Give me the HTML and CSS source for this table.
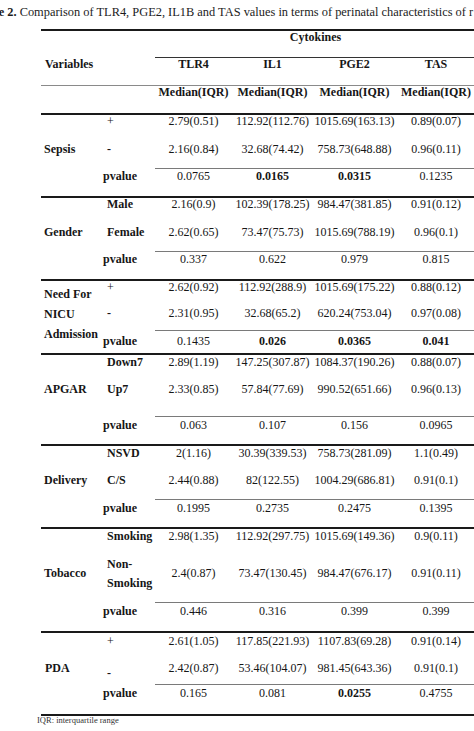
FILE: index.html
```html
<!DOCTYPE html>
<html lang="en">
<head>
<meta charset="utf-8">
<title>Table 2</title>
<link rel="stylesheet" href="styles.css">
</head>
<body>
<div class="page">
  <p class="caption"><b>Table 2.</b> Comparison of TLR4, PGE2, IL1B and TAS values in terms of perinatal characteristics of r</p>
  <table class="tbl">
    <colgroup>
      <col class="c-var"><col class="c-sub"><col class="c-d1"><col class="c-d2"><col class="c-d3"><col class="c-d4">
    </colgroup>
    <thead>
      <tr class="h1"><th></th><th></th><th colspan="4" class="cyto">Cytokines</th></tr>
      <tr class="h2"><th class="var">Variables</th><th></th><th>TLR4</th><th>IL1</th><th>PGE2</th><th>TAS</th></tr>
      <tr class="h3"><th></th><th></th><th>Median(IQR)</th><th>Median(IQR)</th><th>Median(IQR)</th><th>Median(IQR)</th></tr>
    </thead>
    <tbody class="grp">
      <tr class="r1 k28 p0"><th rowspan="3" class="lbl">Sepsis</th><td class="sub reg">+</td><td>2.79(0.51)</td><td>112.92(112.76)</td><td>1015.69(163.13)</td><td>0.89(0.07)</td></tr>
      <tr class="r2 k27 p2"><td class="sub">-</td><td>2.16(0.84)</td><td>32.68(74.42)</td><td>758.73(648.88)</td><td>0.96(0.11)</td></tr>
      <tr class="pv k28 p1"><td class="sub pvl">pvalue</td><td>0.0765</td><td class="b">0.0165</td><td class="b">0.0315</td><td>0.1235</td></tr>
    </tbody>
    <tbody class="grp">
      <tr class="r1 k28 p0"><th rowspan="3" class="lbl">Gender</th><td class="sub">Male</td><td>2.16(0.9)</td><td>102.39(178.25)</td><td>984.47(381.85)</td><td>0.91(0.12)</td></tr>
      <tr class="r2 k27 p2"><td class="sub">Female</td><td>2.62(0.65)</td><td>73.47(75.73)</td><td>1015.69(788.19)</td><td>0.96(0.1)</td></tr>
      <tr class="pv k28 p1"><td class="sub pvl">pvalue</td><td>0.337</td><td>0.622</td><td>0.979</td><td>0.815</td></tr>
    </tbody>
    <tbody class="grp">
      <tr class="r1 k26 p0"><th rowspan="3" class="lbl nicu">Need For<br>NICU<br>Admission</th><td class="sub reg">+</td><td>2.62(0.92)</td><td>112.92(288.9)</td><td>1015.69(175.22)</td><td>0.88(0.12)</td></tr>
      <tr class="r2 k25 p2"><td class="sub">-</td><td>2.31(0.95)</td><td>32.68(65.2)</td><td>620.24(753.04)</td><td>0.97(0.08)</td></tr>
      <tr class="pv k23 p4"><td class="sub pvl">pvalue</td><td>0.1435</td><td class="b">0.026</td><td class="b">0.0365</td><td class="b">0.041</td></tr>
    </tbody>
    <tbody class="grp">
      <tr class="r1 k28 p1"><th rowspan="3" class="lbl">APGAR</th><td class="sub">Down7</td><td>2.89(1.19)</td><td>147.25(307.87)</td><td>1084.37(190.26)</td><td>0.88(0.07)</td></tr>
      <tr class="r2 k35 p2"><td class="sub">Up7</td><td>2.33(0.85)</td><td>57.84(77.69)</td><td>990.52(651.66)</td><td>0.96(0.13)</td></tr>
      <tr class="pv k28 p2"><td class="sub pvl">pvalue</td><td>0.063</td><td>0.107</td><td>0.156</td><td>0.0965</td></tr>
    </tbody>
    <tbody class="grp">
      <tr class="r1 k28 p1"><th rowspan="3" class="lbl">Delivery</th><td class="sub">NSVD</td><td>2(1.16)</td><td>30.39(339.53)</td><td>758.73(281.09)</td><td>1.1(0.49)</td></tr>
      <tr class="r2 k27 p2"><td class="sub">C/S</td><td>2.44(0.88)</td><td>82(122.55)</td><td>1004.29(686.81)</td><td>0.91(0.1)</td></tr>
      <tr class="pv k28 p2"><td class="sub pvl">pvalue</td><td>0.1995</td><td>0.2735</td><td>0.2475</td><td>0.1395</td></tr>
    </tbody>
    <tbody class="grp">
      <tr class="r1 k28 p1"><th rowspan="3" class="lbl tob">Tobacco</th><td class="sub">Smoking</td><td>2.98(1.35)</td><td>112.92(297.75)</td><td>1015.69(149.36)</td><td>0.9(0.11)</td></tr>
      <tr class="r2 k47 p12"><td class="sub two">Non-<br>Smoking</td><td>2.4(0.87)</td><td>73.47(130.45)</td><td>984.47(676.17)</td><td>0.91(0.11)</td></tr>
      <tr class="pv k29 p2"><td class="sub pvl">pvalue</td><td>0.446</td><td>0.316</td><td>0.399</td><td>0.399</td></tr>
    </tbody>
    <tbody class="grp">
      <tr class="r1 k28 p2"><th rowspan="3" class="lbl pda">PDA</th><td class="sub reg">+</td><td>2.61(1.05)</td><td>117.85(221.93)</td><td>1107.83(69.28)</td><td>0.91(0.14)</td></tr>
      <tr class="r2 k25 p3"><td class="sub"><span class="low">-</span></td><td>2.42(0.87)</td><td>53.46(104.07)</td><td>981.45(643.36)</td><td>0.91(0.1)</td></tr>
      <tr class="pv k30 p2"><td class="sub pvl">pvalue</td><td>0.165</td><td>0.081</td><td class="b">0.0255</td><td>0.4755</td></tr>
    </tbody>
  </table>
  <p class="note">IQR: interquartile range</p>
</div>
</body>
</html>
```
FILE: styles.css
```css
html, body {
  margin: 0;
  padding: 0;
  background: #ffffff;
  overflow: hidden;
}

.page {
  width: 474px;
  height: 731px;
  overflow: hidden;
  padding-top: 4px;
  box-sizing: border-box;
  color: #161616;
  font-family: "Liberation Serif", "Times New Roman", serif;
}

.caption {
  margin: 0;
  font-size: 12.4px;
  line-height: 16px;
  white-space: nowrap;
  text-indent: -25px;
  color: #1c1c1c;
}

.caption b {
  font-weight: 700;
}

.tbl {
  margin: 9px 0 0 41px;
  border-collapse: separate;
  border-spacing: 0;
  border-top: 2px solid #1a1a1a;
  border-bottom: 2px solid #1a1a1a;
  table-layout: fixed;
  width: 435px;
  font-size: 12px;
  line-height: 12px;
}

.c-var { width: 59px; }
.c-sub { width: 55px; }
.c-d1 { width: 77px; }
.c-d2 { width: 81px; }
.c-d3 { width: 83px; }
.c-d4 { width: 80px; }

.tbl th,
.tbl td {
  box-sizing: border-box;
  padding: 0;
  vertical-align: top;
  text-align: center;
  white-space: nowrap;
}

.tbl th {
  font-weight: 700;
}

/* header rows */
.h1 > * { height: 27px; }
.h2 > * { height: 27px; padding-top: 2px; }
.h3 > * { height: 28px; padding-top: 2px; border-top: 1px solid #8a8a8a; }

.cyto {
  border-bottom: 1px solid #333333;
}

.var {
  text-align: left !important;
  padding-left: 4px !important;
}

/* body groups */
.grp .r1 > * { border-top: 2px solid #1a1a1a; }
.grp .pv > * { border-top: 1px solid #7a7a7a; }
.grp .pv > .sub { border-top-color: transparent; }

.k23 > td { height: 23px; }
.k25 > td { height: 25px; }
.k26 > td { height: 26px; }
.k27 > td { height: 27px; }
.k28 > td { height: 28px; }
.k29 > td { height: 29px; }
.k30 > td { height: 30px; }
.k35 > td { height: 35px; }
.k47 > td { height: 47px; }

.p0 > td { padding-top: 0; }
.p1 > td { padding-top: 1px; }
.p2 > td { padding-top: 2px; }
.p3 > td { padding-top: 3px; }
.p4 > td { padding-top: 4px; }
.p12 > td { padding-top: 12px; }

.lbl {
  text-align: left !important;
  padding: 28px 0 0 3px !important;
}

.lbl.tob { padding-top: 38px !important; }
.lbl.pda { padding-top: 29px !important; padding-left: 4px !important; }
.lbl.nicu {
  padding-top: 3px !important;
  line-height: 20px;
}

.sub {
  text-align: left !important;
  padding-left: 7px !important;
  font-weight: 700;
}

.sub.reg {
  font-weight: 400;
}

.sub.pvl {
  padding-left: 3px !important;
}

.sub.two {
  padding-top: 0 !important;
  line-height: 19px;
}

.low {
  display: inline-block;
  transform: translateY(5px);
}

.b {
  font-weight: 700;
}

.note {
  margin: 0 0 0 37px;
  font-size: 8.5px;
  line-height: 8px;
  color: #333333;
  padding-top: 0;
}
```
